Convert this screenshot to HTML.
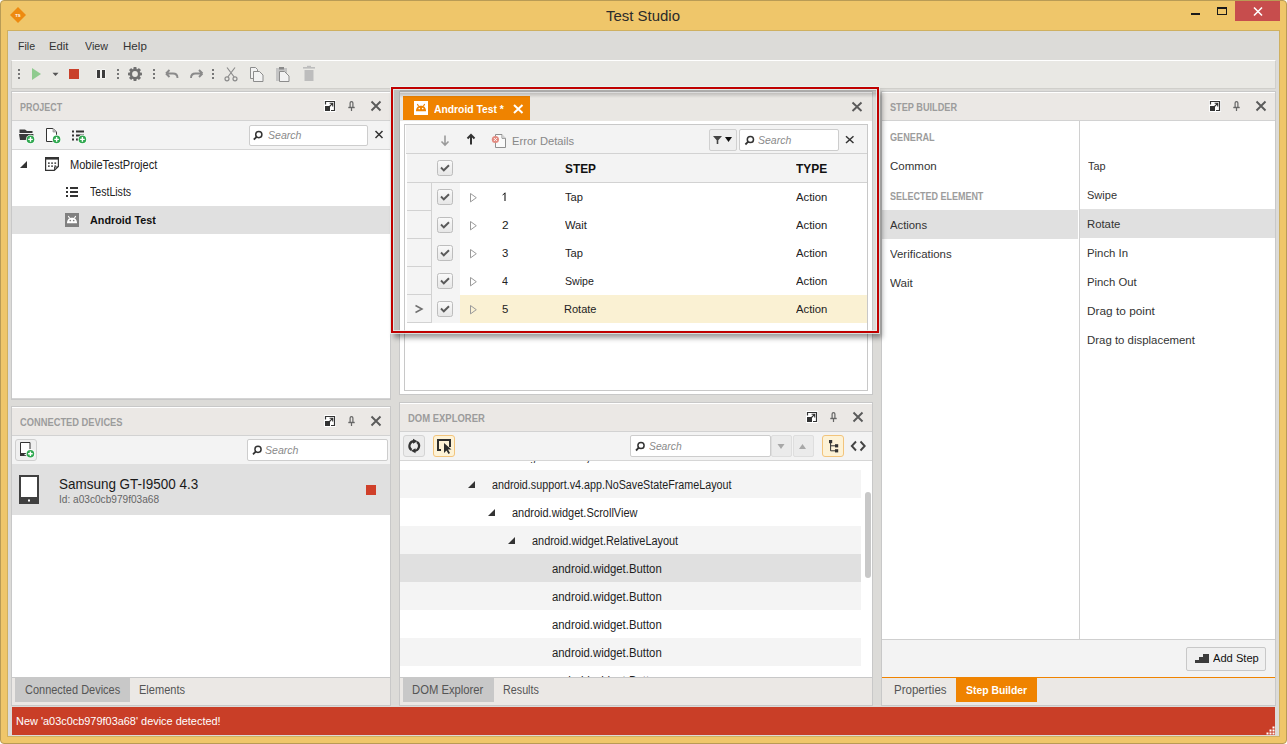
<!DOCTYPE html>
<html><head><meta charset="utf-8">
<style>
*{margin:0;padding:0;box-sizing:border-box}
html,body{width:1287px;height:744px;overflow:hidden;background:#efc66a;font-family:"Liberation Sans",sans-serif;color:#222}
.a{position:absolute}
.t{position:absolute;white-space:nowrap;line-height:1}
svg{position:absolute;overflow:visible}
.bd{position:absolute;border:1px solid #c8c8c8}
.sb{position:absolute;background:#fff;border:1px solid #cdcdcd;border-radius:2px}
</style></head><body>
<div class="a" style="left:0px;top:0px;width:1287px;height:744px;background:#fff;"></div>
<div class="a" style="left:0px;top:0px;width:1287px;height:744px;background:#efc66a;border:1px solid #b99b55;border-radius:4px"></div>
<div class="a" style="left:7px;top:30px;width:1273px;height:707px;background:#dcdbd8;border:1px solid #cfb060"></div>
<svg style="left:9.7px;top:6.8px" width="16" height="16" viewBox="0 0 16 16"><path d="M8 0 L16 8 L8 16 L0 8Z" fill="#ee8a10"/><text x="8" y="9.6" font-size="4.2" fill="#fff" text-anchor="middle" font-family="Liberation Sans" font-weight="bold">TS</text></svg>
<div class="t" style="left:605.67px;top:8.47px;font-size:15.5px;color:#2b2b2b;transform:scaleX(0.9645);transform-origin:0 0;">Test Studio</div>
<div class="a" style="left:1191px;top:13px;width:9px;height:2px;background:#1a1a1a;"></div>
<div class="a" style="left:1217px;top:7px;width:10px;height:8px;background:transparent;border:1px solid #1a1a1a;border-top-width:2px"></div>
<div class="a" style="left:1235px;top:1px;width:45px;height:20px;background:#c74d4d;"></div>
<svg style="left:1253px;top:7px" width="10" height="9" viewBox="0 0 10 9"><path d="M1 0.5 L9 8.5 M9 0.5 L1 8.5" stroke="#fff" stroke-width="1.6"/></svg>
<div class="t" style="left:17.53px;top:41.28px;font-size:11px;color:#333;transform:scaleX(0.9672);transform-origin:0 0;">File</div>
<div class="t" style="left:49.48px;top:41.28px;font-size:11px;color:#333;transform:scaleX(1.0237);transform-origin:0 0;">Edit</div>
<div class="t" style="left:84.96px;top:41.28px;font-size:11px;color:#333;transform:scaleX(0.9734);transform-origin:0 0;">View</div>
<div class="t" style="left:123.45px;top:41.28px;font-size:11px;color:#333;transform:scaleX(1.0535);transform-origin:0 0;">Help</div>
<div class="a" style="left:11px;top:60px;width:1265px;height:29px;background:#e9e8e4;border:1px solid #d0cfcb;border-top-color:#fff"></div>
<div class="a" style="left:11px;top:91px;width:380px;height:309px;background:#fff;border:1px solid #c8c8c8;border-top-width:1px"></div>
<div class="a" style="left:12px;top:398px;width:378px;height:1px;background:#d4d4d4;"></div>
<div class="a" style="left:12px;top:92px;width:378px;height:28px;background:#ebe8e5;border-top:1px solid #fff"></div>
<div class="a" style="left:12px;top:120px;width:378px;height:1px;background:#d2d2d2;"></div>
<div class="a" style="left:12px;top:121px;width:378px;height:28px;background:#f3f3f3;"></div>
<div class="a" style="left:12px;top:149px;width:378px;height:1px;background:#d6d6d6;"></div>
<div class="t" style="left:19.80px;top:102.83px;font-size:10.0px;font-weight:bold;color:#9c9c9c;transform:scaleX(0.8913);transform-origin:0 0;">PROJECT</div>
<div class="sb" style="left:249px;top:125px;width:119px;height:21px"></div>
<div class="t" style="left:267.70px;top:130.36px;font-size:11.5px;font-style:italic;color:#8a8a8a;transform:scaleX(0.9190);transform-origin:0 0;">Search</div>
<div class="a" style="left:12px;top:206px;width:378px;height:28px;background:#e0e0e0;"></div>
<div class="t" style="left:69.79px;top:158.74px;font-size:12px;color:#222;transform:scaleX(0.9217);transform-origin:0 0;">MobileTestProject</div>
<div class="t" style="left:89.77px;top:186.04px;font-size:12px;color:#222;transform:scaleX(0.8807);transform-origin:0 0;">TestLists</div>
<div class="t" style="left:89.73px;top:214.61px;font-size:11.8px;font-weight:bold;color:#111;transform:scaleX(0.9153);transform-origin:0 0;">Android Test</div>
<div class="a" style="left:11px;top:406px;width:380px;height:300px;background:#fff;border:1px solid #c8c8c8"></div>
<div class="a" style="left:12px;top:407px;width:378px;height:28px;background:#ebe8e5;border-top:1px solid #fff"></div>
<div class="a" style="left:12px;top:435px;width:378px;height:1px;background:#d2d2d2;"></div>
<div class="a" style="left:12px;top:436px;width:378px;height:28px;background:#f3f3f3;"></div>
<div class="a" style="left:12px;top:464px;width:378px;height:51px;background:#e0e0e0;"></div>
<div class="t" style="left:19.82px;top:417.73px;font-size:10.0px;font-weight:bold;color:#9c9c9c;transform:scaleX(0.9321);transform-origin:0 0;">CONNECTED DEVICES</div>
<div class="sb" style="left:247px;top:439px;width:141px;height:22px"></div>
<div class="t" style="left:265.40px;top:444.56px;font-size:11.5px;font-style:italic;color:#8a8a8a;transform:scaleX(0.9190);transform-origin:0 0;">Search</div>
<div class="a" style="left:15px;top:439px;width:22px;height:22px;background:#efefef;border:1px solid #cfcfcf;border-radius:3px"></div>
<div class="t" style="left:59.39px;top:477.32px;font-size:14.5px;color:#1a1a1a;transform:scaleX(0.9285);transform-origin:0 0;">Samsung GT-I9500 4.3</div>
<div class="t" style="left:59.37px;top:493.78px;font-size:11px;color:#666;transform:scaleX(0.9191);transform-origin:0 0;">Id: a03c0cb979f03a68</div>
<div class="a" style="left:366px;top:485px;width:10px;height:10px;background:#d0402a;"></div>
<div class="a" style="left:12px;top:677px;width:378px;height:1px;background:#c8c8c8;"></div>
<div class="a" style="left:12px;top:678px;width:378px;height:27px;background:#ebe8e5;"></div>
<div class="a" style="left:15px;top:678px;width:115px;height:24px;background:#c8c8c8;"></div>
<div class="t" style="left:24.64px;top:684.44px;font-size:12px;color:#555;transform:scaleX(0.9145);transform-origin:0 0;">Connected Devices</div>
<div class="t" style="left:139.09px;top:684.44px;font-size:12px;color:#555;transform:scaleX(0.9198);transform-origin:0 0;">Elements</div>
<div class="a" style="left:12px;top:707px;width:1263px;height:28px;background:#c93e27;"></div>
<div class="t" style="left:16.30px;top:715.61px;font-size:11.8px;color:#fff;transform:scaleX(0.9262);transform-origin:0 0;">New 'a03c0cb979f03a68' device detected!</div>
<div class="a" style="left:399px;top:91px;width:474px;height:304px;background:#fff;border:1px solid #c8c8c8"></div>
<div class="a" style="left:400px;top:92px;width:472px;height:29px;background:#e9e7e3;border-top:1px solid #fff"></div>
<div class="a" style="left:403px;top:96px;width:127px;height:24px;background:#ef8300;"></div>
<div class="a" style="left:414px;top:101px;width:14px;height:14px;background:#fff;"></div>
<div class="t" style="left:434.34px;top:103.73px;font-size:11.3px;font-weight:bold;color:#fff;transform:scaleX(0.9148);transform-origin:0 0;">Android Test *</div>
<div class="a" style="left:404px;top:124px;width:464px;height:267px;background:#fff;border:1px solid #c8c8c8"></div>
<div class="a" style="left:406px;top:125px;width:461px;height:28px;background:#f3f3f3;"></div>
<div class="a" style="left:406px;top:153px;width:461px;height:1px;background:#d2d2d2;"></div>
<div class="a" style="left:407px;top:154px;width:460px;height:28px;background:#f3f3f3;"></div>
<div class="a" style="left:407px;top:182px;width:460px;height:1px;background:#d2d2d2;"></div>
<div class="a" style="left:407px;top:183px;width:53px;height:140px;background:#f4f4f4;"></div>
<div class="a" style="left:431px;top:183px;width:1px;height:140px;background:#d2d2d2;"></div>
<div class="a" style="left:407px;top:210px;width:24px;height:1px;background:#d2d2d2;"></div>
<div class="a" style="left:407px;top:238px;width:24px;height:1px;background:#d2d2d2;"></div>
<div class="a" style="left:407px;top:266px;width:24px;height:1px;background:#d2d2d2;"></div>
<div class="a" style="left:407px;top:294px;width:24px;height:1px;background:#d2d2d2;"></div>
<div class="a" style="left:407px;top:322px;width:24px;height:1px;background:#d2d2d2;"></div>
<div class="a" style="left:460px;top:295px;width:407px;height:28px;background:#faf1d3;"></div>
<div class="t" style="left:511.98px;top:136.26px;font-size:11.5px;color:#888;transform:scaleX(0.9720);transform-origin:0 0;">Error Details</div>
<div class="a" style="left:709px;top:129px;width:28px;height:22px;background:#efefef;border:1px solid #d0d0d0;border-radius:2px"></div>
<div class="sb" style="left:739px;top:129px;width:100px;height:22px"></div>
<div class="t" style="left:757.71px;top:135.36px;font-size:11.5px;font-style:italic;color:#8a8a8a;transform:scaleX(0.9134);transform-origin:0 0;">Search</div>
<div class="t" style="left:564.86px;top:161.97px;font-size:13.5px;font-weight:bold;color:#111;transform:scaleX(0.8776);transform-origin:0 0;">STEP</div>
<div class="t" style="left:796.27px;top:161.97px;font-size:13.5px;font-weight:bold;color:#111;transform:scaleX(0.8847);transform-origin:0 0;">TYPE</div>
<div class="t" style="left:565.05px;top:191.61px;font-size:11.8px;color:#222;transform:scaleX(0.9471);transform-origin:0 0;">Tap</div>
<div class="t" style="left:796.38px;top:191.61px;font-size:11.8px;color:#222;transform:scaleX(0.9562);transform-origin:0 0;">Action</div>
<div class="t" style="left:502.11px;top:219.61px;font-size:11.8px;color:#222;transform:scaleX(1.0036);transform-origin:0 0;">2</div>
<div class="t" style="left:565.26px;top:219.61px;font-size:11.8px;color:#222;transform:scaleX(0.9464);transform-origin:0 0;">Wait</div>
<div class="t" style="left:796.38px;top:219.61px;font-size:11.8px;color:#222;transform:scaleX(0.9562);transform-origin:0 0;">Action</div>
<div class="t" style="left:502.27px;top:247.61px;font-size:11.8px;color:#222;transform:scaleX(0.9655);transform-origin:0 0;">3</div>
<div class="t" style="left:565.05px;top:247.61px;font-size:11.8px;color:#222;transform:scaleX(0.9471);transform-origin:0 0;">Tap</div>
<div class="t" style="left:796.38px;top:247.61px;font-size:11.8px;color:#222;transform:scaleX(0.9562);transform-origin:0 0;">Action</div>
<div class="t" style="left:502.45px;top:275.61px;font-size:11.8px;color:#222;transform:scaleX(0.9080);transform-origin:0 0;">4</div>
<div class="t" style="left:564.82px;top:275.61px;font-size:11.8px;color:#222;transform:scaleX(0.8973);transform-origin:0 0;">Swipe</div>
<div class="t" style="left:796.38px;top:275.61px;font-size:11.8px;color:#222;transform:scaleX(0.9562);transform-origin:0 0;">Action</div>
<div class="t" style="left:502.24px;top:303.61px;font-size:11.8px;color:#222;transform:scaleX(0.9655);transform-origin:0 0;">5</div>
<div class="t" style="left:564.40px;top:303.61px;font-size:11.8px;color:#222;transform:scaleX(0.9346);transform-origin:0 0;">Rotate</div>
<div class="t" style="left:796.38px;top:303.61px;font-size:11.8px;color:#222;transform:scaleX(0.9562);transform-origin:0 0;">Action</div>
<div class="a" style="left:399px;top:402px;width:474px;height:304px;background:#fff;border:1px solid #c8c8c8"></div>
<div class="a" style="left:400px;top:403px;width:472px;height:28px;background:#ebe8e5;border-top:1px solid #fff"></div>
<div class="a" style="left:400px;top:431px;width:472px;height:1px;background:#d2d2d2;"></div>
<div class="a" style="left:400px;top:432px;width:472px;height:28px;background:#f3f3f3;"></div>
<div class="a" style="left:400px;top:460px;width:472px;height:1px;background:#d6d6d6;"></div>
<div class="t" style="left:407.67px;top:413.83px;font-size:10.0px;font-weight:bold;color:#9c9c9c;transform:scaleX(0.9472);transform-origin:0 0;">DOM EXPLORER</div>
<div class="a" style="left:400px;top:470px;width:461px;height:28px;background:#f4f4f4;"></div>
<div class="a" style="left:400px;top:526px;width:461px;height:28px;background:#f4f4f4;"></div>
<div class="a" style="left:400px;top:554px;width:461px;height:28px;background:#e0e0e0;"></div>
<div class="a" style="left:400px;top:582px;width:461px;height:28px;background:#f4f4f4;"></div>
<div class="a" style="left:400px;top:638px;width:461px;height:28px;background:#f4f4f4;"></div>
<div class="a" style="left:865px;top:492px;width:6px;height:86px;background:#c8c8c8;border-radius:3px"></div>
<div class="a" style="left:403px;top:435px;width:22px;height:22px;background:#ececec;border:1px solid #d4d4d4;border-radius:3px"></div>
<div class="a" style="left:433px;top:435px;width:22px;height:22px;background:#fdf2d6;border:1px solid #f2c47c;border-radius:3px"></div>
<div class="sb" style="left:630px;top:435px;width:141px;height:22px"></div>
<div class="t" style="left:649.01px;top:441.46px;font-size:11.5px;font-style:italic;color:#8a8a8a;transform:scaleX(0.8965);transform-origin:0 0;">Search</div>
<div class="a" style="left:771px;top:435px;width:21px;height:22px;background:#ebebeb;border:1px solid #dedede;border-radius:2px"></div>
<div class="a" style="left:793px;top:435px;width:21px;height:22px;background:#ebebeb;border:1px solid #dedede;border-radius:2px"></div>
<div class="a" style="left:822px;top:435px;width:22px;height:22px;background:#fdf2d6;border:1px solid #f2c47c;border-radius:3px"></div>
<div class="t" style="left:491.55px;top:478.94px;font-size:12px;color:#1e1e1e;transform:scaleX(0.8954);transform-origin:0 0;">android.support.v4.app.NoSaveStateFrameLayout</div>
<div class="t" style="left:511.54px;top:506.94px;font-size:12px;color:#1e1e1e;transform:scaleX(0.9143);transform-origin:0 0;">android.widget.ScrollView</div>
<div class="t" style="left:531.54px;top:534.94px;font-size:12px;color:#1e1e1e;transform:scaleX(0.9089);transform-origin:0 0;">android.widget.RelativeLayout</div>
<div class="t" style="left:551.52px;top:562.94px;font-size:12px;color:#1e1e1e;transform:scaleX(0.9452);transform-origin:0 0;">android.widget.Button</div>
<div class="t" style="left:551.52px;top:590.94px;font-size:12px;color:#1e1e1e;transform:scaleX(0.9452);transform-origin:0 0;">android.widget.Button</div>
<div class="t" style="left:551.52px;top:618.94px;font-size:12px;color:#1e1e1e;transform:scaleX(0.9452);transform-origin:0 0;">android.widget.Button</div>
<div class="t" style="left:551.52px;top:646.94px;font-size:12px;color:#1e1e1e;transform:scaleX(0.9452);transform-origin:0 0;">android.widget.Button</div>
<div class="a" style="left:400px;top:661px;width:461px;height:16px;overflow:hidden"><div class="t" style="left:151.52px;top:13.94px;font-size:12px;color:#1e1e1e;transform:scaleX(0.9452);transform-origin:0 0;">android.widget.Button</div>
</div>
<div class="a" style="left:400px;top:461px;width:461px;height:2px;overflow:hidden"><div class="t" style="left:79.59px;top:-10.16px;font-size:12px;color:#1e1e1e;transform:scaleX(0.8185);transform-origin:0 0;">android.widget.FrameLayout</div>
</div>
<div class="a" style="left:400px;top:677px;width:472px;height:1px;background:#c8c8c8;"></div>
<div class="a" style="left:400px;top:678px;width:472px;height:27px;background:#ebe8e5;"></div>
<div class="a" style="left:403px;top:678px;width:91px;height:24px;background:#c8c8c8;"></div>
<div class="t" style="left:412.48px;top:684.44px;font-size:12px;color:#555;transform:scaleX(0.9380);transform-origin:0 0;">DOM Explorer</div>
<div class="t" style="left:502.92px;top:684.44px;font-size:12px;color:#555;transform:scaleX(0.8966);transform-origin:0 0;">Results</div>
<div class="a" style="left:881px;top:91px;width:395px;height:615px;background:#fff;border:1px solid #c8c8c8"></div>
<div class="a" style="left:882px;top:92px;width:393px;height:28px;background:#ebe8e5;border-top:1px solid #fff"></div>
<div class="a" style="left:882px;top:120px;width:393px;height:1px;background:#d2d2d2;"></div>
<div class="t" style="left:889.73px;top:103.03px;font-size:10.0px;font-weight:bold;color:#9c9c9c;transform:scaleX(0.9166);transform-origin:0 0;">STEP BUILDER</div>
<div class="a" style="left:1079px;top:121px;width:1px;height:519px;background:#d0d0d0;"></div>
<div class="a" style="left:882px;top:210px;width:196px;height:29px;background:#e0e0e0;"></div>
<div class="a" style="left:1080px;top:209px;width:195px;height:29px;background:#e0e0e0;"></div>
<div class="a" style="left:882px;top:639px;width:393px;height:1px;background:#cfcfcf;"></div>
<div class="a" style="left:882px;top:640px;width:393px;height:37px;background:#f3f3f3;"></div>
<div class="a" style="left:882px;top:677px;width:393px;height:1px;background:#ef8300;"></div>
<div class="a" style="left:882px;top:678px;width:393px;height:27px;background:#ebe8e5;"></div>
<div class="a" style="left:956px;top:678px;width:81px;height:24px;background:#ef8300;"></div>
<div class="t" style="left:889.63px;top:132.73px;font-size:10.0px;font-weight:bold;color:#9c9c9c;transform:scaleX(0.9134);transform-origin:0 0;">GENERAL</div>
<div class="t" style="left:889.74px;top:192.13px;font-size:10.0px;font-weight:bold;color:#9c9c9c;transform:scaleX(0.8986);transform-origin:0 0;">SELECTED ELEMENT</div>
<div class="t" style="left:889.51px;top:160.61px;font-size:11.8px;color:#333;transform:scaleX(0.9763);transform-origin:0 0;">Common</div>
<div class="t" style="left:890.08px;top:219.91px;font-size:11.8px;color:#333;transform:scaleX(0.9570);transform-origin:0 0;">Actions</div>
<div class="t" style="left:890.05px;top:248.91px;font-size:11.8px;color:#333;transform:scaleX(0.9691);transform-origin:0 0;">Verifications</div>
<div class="t" style="left:890.05px;top:277.91px;font-size:11.8px;color:#333;transform:scaleX(0.9855);transform-origin:0 0;">Wait</div>
<div class="t" style="left:1087.66px;top:160.61px;font-size:11.8px;color:#333;transform:scaleX(0.9252);transform-origin:0 0;">Tap</div>
<div class="t" style="left:1087.40px;top:189.61px;font-size:11.8px;color:#333;transform:scaleX(0.9359);transform-origin:0 0;">Swipe</div>
<div class="t" style="left:1086.97px;top:218.61px;font-size:11.8px;color:#333;transform:scaleX(0.9586);transform-origin:0 0;">Rotate</div>
<div class="t" style="left:1086.97px;top:247.61px;font-size:11.8px;color:#333;transform:scaleX(0.9634);transform-origin:0 0;">Pinch In</div>
<div class="t" style="left:1086.97px;top:276.61px;font-size:11.8px;color:#333;transform:scaleX(0.9574);transform-origin:0 0;">Pinch Out</div>
<div class="t" style="left:1086.93px;top:305.61px;font-size:11.8px;color:#333;transform:scaleX(1.0043);transform-origin:0 0;">Drag to point</div>
<div class="t" style="left:1086.96px;top:334.61px;font-size:11.8px;color:#333;transform:scaleX(0.9679);transform-origin:0 0;">Drag to displacement</div>
<div class="a" style="left:1186px;top:647px;width:80px;height:24px;background:#f0f0f0;border:1px solid #c8c8c8;border-radius:2px"></div>
<div class="t" style="left:1212.78px;top:653.41px;font-size:11.8px;color:#111;transform:scaleX(0.9432);transform-origin:0 0;">Add Step</div>
<div class="t" style="left:894.25px;top:684.44px;font-size:12px;color:#555;transform:scaleX(0.9610);transform-origin:0 0;">Properties</div>
<div class="t" style="left:966.00px;top:684.86px;font-size:11.5px;font-weight:bold;color:#fff;transform:scaleX(0.9029);transform-origin:0 0;">Step Builder</div>
<svg style="left:0;top:0" width="1287" height="744"><defs><linearGradient id="cbg" x1="0" y1="0" x2="0" y2="1"><stop offset="0" stop-color="#fafafa"/><stop offset="1" stop-color="#e6e6e6"/></linearGradient><linearGradient id="btng" x1="0" y1="0" x2="0" y2="1"><stop offset="0" stop-color="#fbfbfb"/><stop offset="1" stop-color="#e4e4e4"/></linearGradient></defs><rect x="18" y="69" width="2" height="2" fill="#777"/><rect x="18" y="73" width="2" height="2" fill="#777"/><rect x="18" y="77" width="2" height="2" fill="#777"/><rect x="117" y="69" width="2" height="2" fill="#777"/><rect x="117" y="73" width="2" height="2" fill="#777"/><rect x="117" y="77" width="2" height="2" fill="#777"/><rect x="153" y="69" width="2" height="2" fill="#777"/><rect x="153" y="73" width="2" height="2" fill="#777"/><rect x="153" y="77" width="2" height="2" fill="#777"/><rect x="212" y="69" width="2" height="2" fill="#777"/><rect x="212" y="73" width="2" height="2" fill="#777"/><rect x="212" y="77" width="2" height="2" fill="#777"/><path d="M32 68 L41 74 L32 80Z" fill="#8fcb8f"/><path d="M52.5 72.8 L58.5 72.8 L55.5 76Z" fill="#555"/><rect x="69" y="69" width="10" height="10" fill="#c9402a"/><rect x="96.5" y="69.5" width="4" height="9" fill="#fff"/><rect x="101.5" y="69.5" width="4" height="9" fill="#fff"/><rect x="97" y="70" width="3" height="8" fill="#3c3c3c"/><rect x="102" y="70" width="3" height="8" fill="#3c3c3c"/><g transform="translate(135 74)" fill="#707070"><circle r="5.3"/><rect x="-1.6" y="-7" width="3.2" height="3" rx="0.8" transform="rotate(0)"/><rect x="-1.6" y="-7" width="3.2" height="3" rx="0.8" transform="rotate(45)"/><rect x="-1.6" y="-7" width="3.2" height="3" rx="0.8" transform="rotate(90)"/><rect x="-1.6" y="-7" width="3.2" height="3" rx="0.8" transform="rotate(135)"/><rect x="-1.6" y="-7" width="3.2" height="3" rx="0.8" transform="rotate(180)"/><rect x="-1.6" y="-7" width="3.2" height="3" rx="0.8" transform="rotate(225)"/><rect x="-1.6" y="-7" width="3.2" height="3" rx="0.8" transform="rotate(270)"/><rect x="-1.6" y="-7" width="3.2" height="3" rx="0.8" transform="rotate(315)"/><circle r="2.9" fill="#e9e8e4"/></g><path d="M166 73.5 L169.5 70 M166 73.5 L169.5 77 M166 73.5 H173 Q177.5 73.5 177.5 78" stroke="#8a8a8a" stroke-width="1.9" fill="none"/><path d="M202.5 73.5 L199 70 M202.5 73.5 L199 77 M202.5 73.5 H195.5 Q191 73.5 191 78" stroke="#8a8a8a" stroke-width="1.9" fill="none"/><g stroke="#8c8c8c" stroke-width="1.2" fill="none"><path d="M227 67.5 L234.2 77 M235 67.5 L227.8 77"/><circle cx="227" cy="78.8" r="2"/><circle cx="235" cy="78.8" r="2"/></g><g stroke="#8c8c8c" stroke-width="1" fill="#f2f2f2"><path d="M250.5 67.5 h5 l2 2 v9 h-7z"/><path d="M253.5 71.5 h6 l3.5 3.5 v6.5 h-9.5z"/></g><rect x="276" y="68" width="11" height="13" fill="#c4c4c4"/><rect x="279" y="67" width="5" height="2.5" fill="#8a8a8a"/><path d="M279.5 71.5 h5 l4.5 4.5 v5.5 h-9.5z" fill="#f2f2f2" stroke="#8c8c8c"/><rect x="303" y="67" width="12" height="1.6" fill="#bdbdbd"/><rect x="307" y="65.8" width="4" height="2" fill="#bdbdbd"/><rect x="304.5" y="70" width="9" height="11" fill="#bdbdbd"/><rect x="324" y="100" width="12" height="12" fill="#fff" rx="1"/><path d="M325.5 104.5 V101.5 H334.5 V110.5 H331" stroke="#333" stroke-width="1.2" fill="none"/><rect x="325" y="106" width="5" height="5" fill="#333"/><path d="M329.5 106.5 L332.6 103.4 M329.6 103.3 H332.7 V106.4" stroke="#333" stroke-width="1.1" fill="none"/><path d="M350.1 107.2 V103 Q350.1 101.6 351.5 101.6 Q352.9 101.6 352.9 103 V107.2" stroke="#666" stroke-width="1.2" fill="none"/><rect x="348.3" y="106.8" width="6.4" height="1.4" fill="#666"/><rect x="350.9" y="108" width="1.2" height="3" fill="#666"/><path d="M371.5 101.5 L380.5 110.5 M380.5 101.5 L371.5 110.5" stroke="#5a5a5a" stroke-width="1.9" fill="none"/><path d="M19.5 133 L19.5 129.5 L25 129.5 L27 131 L32.5 131 L32.5 133Z" fill="#3a3a3a"/><path d="M19 134 L33.5 134 L32.5 140 L20 140Z" fill="#3a3a3a"/><circle cx="30.5" cy="139.4" r="4.6" fill="#fff"/><circle cx="30.5" cy="139.4" r="3.8" fill="#2fa84f"/><path d="M28.2 139.4 h4.6 M30.5 137.1 v4.6" stroke="#fff" stroke-width="1.4"/><path d="M46.5 128.5 H53 L56.5 132 V141.5 H46.5Z" fill="#fff" stroke="#333"/><path d="M53 128.5 V132 H56.5" fill="#bbb" stroke="#999" stroke-width="0.8"/><circle cx="56.6" cy="139.4" r="4.6" fill="#fff"/><circle cx="56.6" cy="139.4" r="3.8" fill="#2fa84f"/><path d="M54.300000000000004 139.4 h4.6 M56.6 137.1 v4.6" stroke="#fff" stroke-width="1.4"/><rect x="72" y="130.5" width="2" height="2" fill="#333"/><rect x="76" y="130.5" width="8" height="2" fill="#333"/><rect x="72" y="134.5" width="2" height="2" fill="#333"/><rect x="76" y="134.5" width="8" height="2" fill="#333"/><rect x="72" y="138.5" width="2" height="2" fill="#333"/><rect x="76" y="138.5" width="8" height="2" fill="#333"/><circle cx="82.4" cy="139.4" r="4.6" fill="#fff"/><circle cx="82.4" cy="139.4" r="3.8" fill="#2fa84f"/><path d="M80.10000000000001 139.4 h4.6 M82.4 137.1 v4.6" stroke="#fff" stroke-width="1.4"/><circle cx="258.8" cy="134.6" r="3.1" stroke="#333" stroke-width="1.5" fill="none"/><path d="M256.6 136.79999999999998 L253.8 139.6" stroke="#333" stroke-width="1.8"/><path d="M375.5 131 L382.5 138 M382.5 131 L375.5 138" stroke="#333" stroke-width="1.5" fill="none"/><path d="M27 161 L27 168 L20 168Z" fill="#333"/><path d="M45.6 157.6 H58.4 V166.5 L54.3 170.4 H45.6Z" fill="#fff" stroke="#333" stroke-width="1.2"/><rect x="45" y="157" width="14" height="2.6" fill="#333"/><path d="M54.6 170 L54.6 167 L58 167" fill="none" stroke="#333" stroke-width="1"/><rect x="48" y="162.3" width="1.7" height="1.7" fill="#555"/><rect x="48" y="165.3" width="1.7" height="1.7" fill="#555"/><rect x="51.2" y="162.3" width="1.7" height="1.7" fill="#555"/><rect x="51.2" y="165.3" width="1.7" height="1.7" fill="#555"/><rect x="54.4" y="162.3" width="1.7" height="1.7" fill="#555"/><rect x="54.4" y="165.3" width="1.7" height="1.7" fill="#555"/><rect x="66" y="187" width="2" height="2" fill="#333"/><rect x="70" y="187" width="8" height="2" fill="#333"/><rect x="66" y="191" width="2" height="2" fill="#333"/><rect x="70" y="191" width="8" height="2" fill="#333"/><rect x="66" y="195" width="2" height="2" fill="#333"/><rect x="70" y="195" width="8" height="2" fill="#333"/><rect x="65" y="213" width="14" height="14" fill="#808080"/><path d="M67 223.2 C67 219.5 69 217.7 72 217.7 C75 217.7 77 219.5 77 223.2 Z" fill="#fff"/><path d="M68.3 215.9 L69.6 218.2 M75.7 215.9 L74.4 218.2" stroke="#fff" stroke-width="1.1"/><circle cx="70.3" cy="220.5" r="0.85" fill="#808080"/><circle cx="73.7" cy="220.5" r="0.85" fill="#808080"/><rect x="324" y="415" width="12" height="12" fill="#fff" rx="1"/><path d="M325.5 419.5 V416.5 H334.5 V425.5 H331" stroke="#333" stroke-width="1.2" fill="none"/><rect x="325" y="421" width="5" height="5" fill="#333"/><path d="M329.5 421.5 L332.6 418.4 M329.6 418.3 H332.7 V421.4" stroke="#333" stroke-width="1.1" fill="none"/><path d="M350.1 422.2 V418 Q350.1 416.6 351.5 416.6 Q352.9 416.6 352.9 418 V422.2" stroke="#666" stroke-width="1.2" fill="none"/><rect x="348.3" y="421.8" width="6.4" height="1.4" fill="#666"/><rect x="350.9" y="423" width="1.2" height="3" fill="#666"/><path d="M371.5 416.5 L380.5 425.5 M380.5 416.5 L371.5 425.5" stroke="#5a5a5a" stroke-width="1.9" fill="none"/><path d="M20.5 442.5 H30 V455.5 H20.5Z" fill="#fff" stroke="#333"/><rect x="20" y="453" width="10.5" height="3" fill="#333"/><rect x="24.5" y="454" width="1.5" height="1.2" fill="#fff"/><circle cx="30.4" cy="453.7" r="4.6" fill="#fff"/><circle cx="30.4" cy="453.7" r="3.8" fill="#2fa84f"/><path d="M28.099999999999998 453.7 h4.6 M30.4 451.4 v4.6" stroke="#fff" stroke-width="1.4"/><circle cx="258" cy="449.3" r="3.1" stroke="#333" stroke-width="1.5" fill="none"/><path d="M255.8 451.5 L253 454.3" stroke="#333" stroke-width="1.8"/><rect x="19" y="475" width="20" height="29" fill="#404040"/><rect x="21" y="477" width="16" height="20" fill="#fff"/><rect x="28" y="499.5" width="2" height="2" fill="#fff"/><path d="M416 111.2 C416 107.5 418 105.7 421 105.7 C424 105.7 426 107.5 426 111.2 Z" fill="#ef8300"/><path d="M417.3 103.9 L418.6 106.2 M424.7 103.9 L423.4 106.2" stroke="#ef8300" stroke-width="1.1"/><circle cx="419.3" cy="108.5" r="0.85" fill="#fff"/><circle cx="422.7" cy="108.5" r="0.85" fill="#fff"/><path d="M514 105 L522.5 113 M522.5 105 L514 113" stroke="#fff" stroke-width="2" fill="none"/><path d="M852.5 102.5 L861.5 111.0 M861.5 102.5 L852.5 111.0" stroke="#5a5a5a" stroke-width="1.9" fill="none"/><path d="M445 135.5 V145 M441.5 141.5 L445 145 L448.5 141.5" stroke="#9a9a9a" stroke-width="1.6" fill="none"/><path d="M471 144.5 V135 M467.5 138.5 L471 135 L474.5 138.5" stroke="#333" stroke-width="2" fill="none"/><path d="M495.5 134.5 H502 V138.3 H505.5 V147.5 H495.5Z" fill="#fafafa" stroke="#8f8f8f" stroke-width="1"/><path d="M502.3 134.2 L505.8 137.9 H502.3Z" fill="#cfcfcf"/><circle cx="495.4" cy="139.5" r="3.6" fill="#e28a80"/><path d="M493.9 138 L496.9 141 M496.9 138 L493.9 141" stroke="#fff" stroke-width="0.9"/><path d="M713 136 H722 L718.3 140.2 V144 H716.7 V140.2Z" fill="#444"/><path d="M725 137 H732 L728.5 142Z" fill="#111"/><circle cx="750.4" cy="139.5" r="3.1" stroke="#333" stroke-width="1.5" fill="none"/><path d="M748.1999999999999 141.7 L745.4 144.5" stroke="#333" stroke-width="1.8"/><path d="M846 136.3 L853.5 143.0 M853.5 136.3 L846 143.0" stroke="#333" stroke-width="1.5" fill="none"/><rect x="437.5" y="160.5" width="15" height="15" rx="2" fill="url(#cbg)" stroke="#bdbdbd"/><path d="M441 167.5 L443.8 170.3 L449 165.2" stroke="#5a5a5a" stroke-width="1.9" fill="none"/><path d="M505 192.8 V201" stroke="#222" stroke-width="1.15"/><path d="M505.2 193 L502.6 195" stroke="#222" stroke-width="1"/><rect x="437.5" y="189.5" width="15" height="15" rx="2" fill="url(#cbg)" stroke="#bdbdbd"/><path d="M441 196.5 L443.8 199.3 L449 194.2" stroke="#5a5a5a" stroke-width="1.9" fill="none"/><path d="M470.5 193.5 L476.3 197.7 L470.5 201.9Z" fill="none" stroke="#9a9a9a" stroke-width="1"/><rect x="437.5" y="217.5" width="15" height="15" rx="2" fill="url(#cbg)" stroke="#bdbdbd"/><path d="M441 224.5 L443.8 227.3 L449 222.2" stroke="#5a5a5a" stroke-width="1.9" fill="none"/><path d="M470.5 221.5 L476.3 225.7 L470.5 229.9Z" fill="none" stroke="#9a9a9a" stroke-width="1"/><rect x="437.5" y="245.5" width="15" height="15" rx="2" fill="url(#cbg)" stroke="#bdbdbd"/><path d="M441 252.5 L443.8 255.3 L449 250.2" stroke="#5a5a5a" stroke-width="1.9" fill="none"/><path d="M470.5 249.5 L476.3 253.7 L470.5 257.9Z" fill="none" stroke="#9a9a9a" stroke-width="1"/><rect x="437.5" y="273.5" width="15" height="15" rx="2" fill="url(#cbg)" stroke="#bdbdbd"/><path d="M441 280.5 L443.8 283.3 L449 278.2" stroke="#5a5a5a" stroke-width="1.9" fill="none"/><path d="M470.5 277.5 L476.3 281.7 L470.5 285.9Z" fill="none" stroke="#9a9a9a" stroke-width="1"/><rect x="437.5" y="301.5" width="15" height="15" rx="2" fill="url(#cbg)" stroke="#bdbdbd"/><path d="M441 308.5 L443.8 311.3 L449 306.2" stroke="#5a5a5a" stroke-width="1.9" fill="none"/><path d="M470.5 305.5 L476.3 309.7 L470.5 313.9Z" fill="none" stroke="#9a9a9a" stroke-width="1"/><path d="M415.5 305.5 L422 309 L415.5 312.5" fill="none" stroke="#707070" stroke-width="1.5"/><rect x="806" y="411" width="12" height="12" fill="#fff" rx="1"/><path d="M807.5 415.5 V412.5 H816.5 V421.5 H813" stroke="#333" stroke-width="1.2" fill="none"/><rect x="807" y="417" width="5" height="5" fill="#333"/><path d="M811.5 417.5 L814.6 414.4 M811.6 414.3 H814.7 V417.4" stroke="#333" stroke-width="1.1" fill="none"/><path d="M832.1 418.2 V414 Q832.1 412.6 833.5 412.6 Q834.9 412.6 834.9 414 V418.2" stroke="#666" stroke-width="1.2" fill="none"/><rect x="830.3" y="417.8" width="6.4" height="1.4" fill="#666"/><rect x="832.9" y="419" width="1.2" height="3" fill="#666"/><path d="M853.5 412.5 L862.5 421.5 M862.5 412.5 L853.5 421.5" stroke="#5a5a5a" stroke-width="1.9" fill="none"/><path d="M414.5 441.2 A4.8 4.8 0 0 0 411.6 450" fill="none" stroke="#333" stroke-width="2.3"/><path d="M413 438.8 L417.5 441.3 L413 443.8Z" fill="#333"/><path d="M414 450.8 A4.8 4.8 0 0 0 416.9 442" fill="none" stroke="#333" stroke-width="2.3"/><path d="M415.5 448.2 L411 450.7 L415.5 453.2Z" fill="#333"/><path d="M441 450 H438 V440 H450 V447" fill="none" stroke="#2d2d2d" stroke-width="2"/><path d="M444 443 L444 453 L446.5 450.5 L448.5 454 L450 453 L448 449.5 L451.5 449.5Z" fill="#2d2d2d"/><circle cx="641" cy="445.5" r="3.1" stroke="#333" stroke-width="1.5" fill="none"/><path d="M638.8 447.7 L636 450.5" stroke="#333" stroke-width="1.8"/><path d="M777.5 444 H784.5 L781 449Z" fill="#a8a8a8"/><path d="M799 449 H806 L802.5 444Z" fill="#a8a8a8"/><rect x="829" y="440" width="3.2" height="3.2" fill="#333"/><rect x="835" y="444.2" width="3.2" height="3.2" fill="#333"/><rect x="835" y="449.2" width="3.2" height="3.2" fill="#333"/><path d="M830.6 443 V450.8 H835 M830.6 445.8 H835" fill="none" stroke="#333" stroke-width="1"/><path d="M856 441.5 L851.8 446 L856 450.5 M860.5 441.5 L864.7 446 L860.5 450.5" fill="none" stroke="#444" stroke-width="1.9"/><path d="M475 481 L475 488 L468 488Z" fill="#333"/><path d="M495 509 L495 516 L488 516Z" fill="#333"/><path d="M515 537 L515 544 L508 544Z" fill="#333"/><rect x="1209" y="100" width="12" height="12" fill="#fff" rx="1"/><path d="M1210.5 104.5 V101.5 H1219.5 V110.5 H1216" stroke="#333" stroke-width="1.2" fill="none"/><rect x="1210" y="106" width="5" height="5" fill="#333"/><path d="M1214.5 106.5 L1217.6 103.4 M1214.6 103.3 H1217.7 V106.4" stroke="#333" stroke-width="1.1" fill="none"/><path d="M1235.1 107.2 V103 Q1235.1 101.6 1236.5 101.6 Q1237.9 101.6 1237.9 103 V107.2" stroke="#666" stroke-width="1.2" fill="none"/><rect x="1233.3" y="106.8" width="6.4" height="1.4" fill="#666"/><rect x="1235.9" y="108" width="1.2" height="3" fill="#666"/><path d="M1256.5 101.5 L1265.5 110.5 M1265.5 101.5 L1256.5 110.5" stroke="#5a5a5a" stroke-width="1.9" fill="none"/><rect x="1266.5" y="732.5" width="2" height="2" fill="#fff"/><rect x="1269.5" y="732.5" width="2" height="2" fill="#fff"/><rect x="1272.5" y="732.5" width="2" height="2" fill="#fff"/><rect x="1269.5" y="729.5" width="2" height="2" fill="#fff"/><rect x="1272.5" y="729.5" width="2" height="2" fill="#fff"/><rect x="1272.5" y="726.5" width="2" height="2" fill="#fff"/><path d="M1195 660 H1199 V657 H1203 V654 H1209 V663 H1195Z" fill="#3c3c3c"/></svg>
<div class="a" style="left:393px;top:89px;width:7px;height:242px;background:rgba(0,0,0,.13)"></div>
<div class="a" style="left:400px;top:89px;width:477px;height:9px;background:linear-gradient(rgba(0,0,0,0) 0px,rgba(0,0,0,.22) 1.5px,rgba(0,0,0,.12) 3px,rgba(0,0,0,.16) 4.5px,rgba(0,0,0,0) 9px)"></div>
<div class="a" style="left:391px;top:87px;width:488px;height:246px;border:2px solid #c00000;box-shadow:0 0 0 1px rgba(232,246,243,.75),3px 5px 5px rgba(0,0,0,.38),inset 0 0 0 1px rgba(232,246,243,.75)"></div>
</body></html>
